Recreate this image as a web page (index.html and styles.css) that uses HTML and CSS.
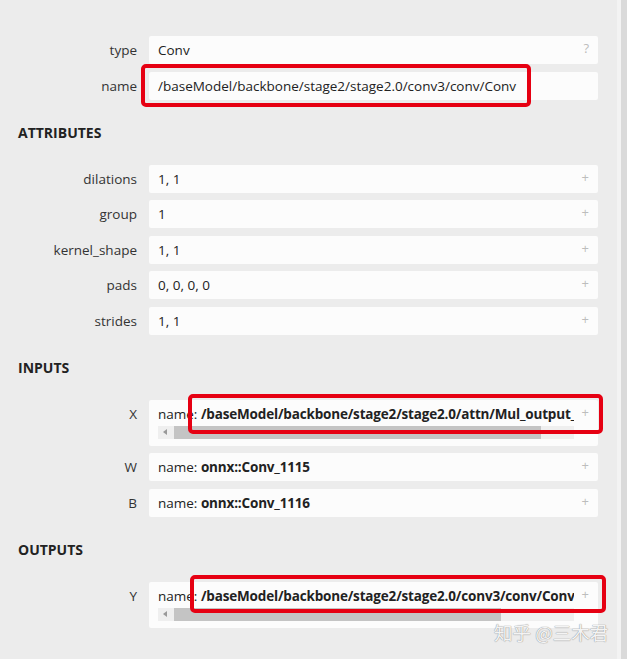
FILE: index.html
```html
<!DOCTYPE html>
<html lang="en">
<head>
    <meta charset="UTF-8">
    <title>Node Properties</title>
    <link rel="stylesheet" href="styles.css">
</head>
<body>

<div class="page">
    <div class="sidebar">

        <!-- Node -->
        <div class="rows">
            <div class="row">
                <div class="label">type</div>
                <div class="value">Conv<span class="btn">?</span></div>
            </div>
            <div class="row">
                <div class="label">name</div>
                <div class="value">/baseModel/backbone/stage2/stage2.0/conv3/conv/Conv
                    <div class="mark mark-name"></div>
                </div>
            </div>
        </div>

        <!-- Attributes -->
        <div class="header">ATTRIBUTES</div>
        <div class="rows">
            <div class="row">
                <div class="label">dilations</div>
                <div class="value">1, 1<span class="btn">+</span></div>
            </div>
            <div class="row">
                <div class="label">group</div>
                <div class="value">1<span class="btn">+</span></div>
            </div>
            <div class="row">
                <div class="label">kernel_shape</div>
                <div class="value">1, 1<span class="btn">+</span></div>
            </div>
            <div class="row">
                <div class="label">pads</div>
                <div class="value">0, 0, 0, 0<span class="btn">+</span></div>
            </div>
            <div class="row">
                <div class="label">strides</div>
                <div class="value">1, 1<span class="btn">+</span></div>
            </div>
        </div>

        <!-- Inputs -->
        <div class="header">INPUTS</div>
        <div class="rows">
            <div class="row">
                <div class="label">X</div>
                <div class="value tall">
                    <div class="scroll-text">name: <b>/baseModel/backbone/stage2/stage2.0/attn/Mul_output_0</b></div>
                    <div class="scrollbar">
                        <span class="arrow"></span>
                        <span class="thumb" style="width: 367px"></span>
                    </div>
                    <span class="btn">+</span>
                    <div class="mark mark-x"></div>
                </div>
            </div>
            <div class="row">
                <div class="label">W</div>
                <div class="value">name: <b>onnx::Conv_1115</b><span class="btn">+</span></div>
            </div>
            <div class="row">
                <div class="label">B</div>
                <div class="value">name: <b>onnx::Conv_1116</b><span class="btn">+</span></div>
            </div>
        </div>

        <!-- Outputs -->
        <div class="header">OUTPUTS</div>
        <div class="rows">
            <div class="row">
                <div class="label">Y</div>
                <div class="value tall">
                    <div class="scroll-text">name: <b>/baseModel/backbone/stage2/stage2.0/conv3/conv/Conv_output_0</b></div>
                    <div class="scrollbar">
                        <span class="arrow"></span>
                        <span class="thumb" style="width: 327px"></span>
                    </div>
                    <span class="btn">+</span>
                    <div class="mark mark-y"></div>
                </div>
            </div>
        </div>

    </div>
    <div class="edge"></div>

    <div class="watermark">知乎 @三木君</div>
</div>

</body>
</html>
```

FILE: styles.css
```css
body {
    margin: 0;
    background-color: #ececec;
    font-family: "Open Sans", "Noto Sans", sans-serif;
    font-size: 13.5px;
    color: #333;
}
.page {
    display: flex;
    height: 659px;
    position: relative;
    overflow: hidden;
}
.sidebar {
    flex: 1;
    min-width: 0;
    padding: 36px 19px 0 18px;
}
.edge {
    width: 6px;
    border-left: 4px solid #f3f3f3;
    background-color: #dadada;
}
.rows {
    display: flex;
    flex-direction: column;
    gap: 7.5px;
}
.row {
    display: flex;
    align-items: flex-start;
}
.label {
    flex: none;
    width: 119px;
    padding-right: 12px;
    text-align: right;
    line-height: 28px;
    color: #333;
    white-space: nowrap;
}
.value {
    flex: 1;
    min-width: 0;
    position: relative;
    height: 28px;
    line-height: 28px;
    padding: 0 24px 0 9px;
    background-color: #fcfcfc;
    border-radius: 2px;
    color: #222;
    white-space: nowrap;
}
.value b {
    font-weight: bold;
    letter-spacing: -0.17px;
}
.value.tall {
    height: 46px;
}
.scroll-text {
    overflow: hidden;
    height: 27px;
}
.scrollbar {
    display: flex;
    align-items: center;
    height: 13px;
    background-color: #efefef;
    margin-top: -1px;
}
.arrow {
    width: 0;
    height: 0;
    margin: 0 7px 0 5px;
    border-top: 3px solid transparent;
    border-bottom: 3px solid transparent;
    border-right: 4px solid #999;
}
.thumb {
    height: 13px;
    background-color: #c4c4c4;
}
.btn {
    position: absolute;
    right: 9px;
    top: 0;
    line-height: 24px;
    font-size: 13px;
    color: #bdbdbd;
}

/* red annotation boxes */
.mark {
    position: absolute;
    border: 4px solid #e60012;
    border-radius: 5px;
}
.mark-name {
    left: -8px;
    top: -8px;
    width: 382px;
    height: 35px;
}
.mark-x {
    left: 39px;
    top: -6px;
    width: 407px;
    height: 32px;
}
.mark-y {
    left: 41px;
    top: -7px;
    width: 408px;
    height: 30px;
}

.header {
    font-weight: bold;
    font-size: 14px;
    line-height: 20px;
    margin: 23px 0 22px;
    color: #222;
}
.watermark {
    position: absolute;
    left: 494px;
    top: 619px;
    font-family: "Noto Sans CJK SC", sans-serif;
    font-size: 18.5px;
    color: rgba(255, 255, 255, 0.92);
    text-shadow: 0 0 1px #888, 0 0 1px #aaa;
}
```
